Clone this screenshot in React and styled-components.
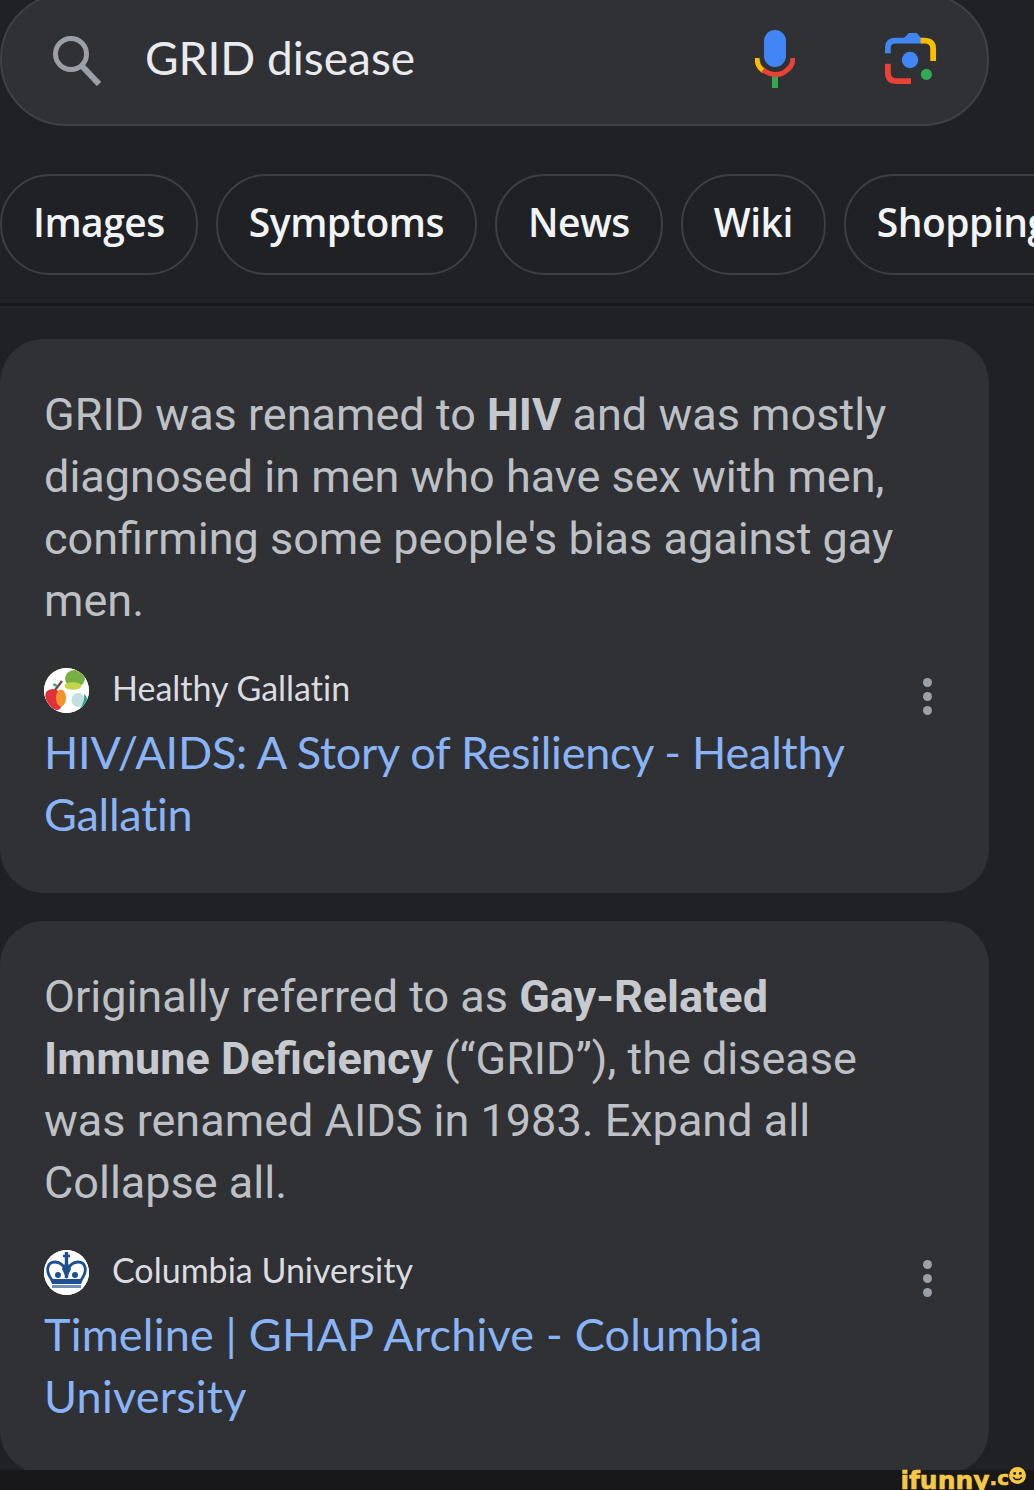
import React from 'react';
import styled, { createGlobalStyle } from 'styled-components';

const GlobalStyle = createGlobalStyle`
  html, body {
    margin: 0;
    padding: 0;
    background: #202124;
  }
`;

const Page = styled.div`
  position: relative;
  width: 1034px;
  height: 1490px;
  overflow: hidden;
  background: #202124;
  font-family: Roboto, "Liberation Sans", sans-serif;
`;

const SearchBar = styled.div`
  box-sizing: border-box;
  width: 989px;
  height: 133px;
  margin-top: -7px;
  display: flex;
  align-items: center;
  padding-left: 50px;
  background: #303134;
  border: 2px solid #3f4145;
  border-radius: 66px;
`;

const SearchText = styled.div`
  margin-left: 43px;
  margin-bottom: 5px;
  flex: 1;
  font-family: Lato, "Noto Sans", sans-serif;
  font-size: 46px;
  font-variant-ligatures: none;
  color: #e8eaed;
`;

const IconSlot = styled.div`
  display: flex;
  margin-right: ${(p) => p.$gap}px;
  margin-bottom: 2px;
`;

const ChipRow = styled.div`
  display: flex;
  gap: 18px;
  margin-top: 48px;
  overflow: hidden;
`;

const Chip = styled.div`
  box-sizing: border-box;
  flex: none;
  height: 101px;
  padding: 0 31px 6px;
  display: flex;
  align-items: center;
  border: 2px solid #3c4043;
  border-radius: 50px;
  font-family: "Open Sans", Lato, sans-serif;
  font-size: 39px;
  font-weight: 600;
  letter-spacing: -0.5px;
  color: #f1f3f4;
`;

const Divider = styled.div`
  height: 3px;
  margin-top: 28px;
  background: #17181a;
  border-bottom: 2px solid #27282b;
`;

const Card = styled.div`
  box-sizing: border-box;
  width: 989px;
  height: ${(p) => p.$height}px;
  margin-top: ${(p) => p.$top}px;
  padding: 45px 44px 0;
  background: #303134;
  border-radius: 44px;
`;

const Snippet = styled.div`
  font-size: 45px;
  line-height: 62px;
  color: #bdc1c6;

  b {
    font-weight: 700;
    color: #c6c9ce;
  }
`;

const SourceRow = styled.div`
  display: flex;
  align-items: center;
  margin-top: 27px;
  height: 62px;
`;

const Favicon = styled.div`
  flex: none;
  display: flex;
  width: 45px;
  height: 45px;
  margin-top: 1px;
  border-radius: 50%;
  overflow: hidden;
  background: #fff;
`;

const SourceName = styled.div`
  flex: 1;
  margin-left: 23px;
  margin-top: -5px;
  font-family: Lato, "Noto Sans", sans-serif;
  font-size: 34px;
  font-variant-ligatures: none;
  color: #dadce0;
`;

const Dots = styled.div`
  display: flex;
  flex-direction: column;
  gap: 5px;
  margin-right: 13px;
  margin-top: 12px;
`;

const Dot = styled.span`
  width: 9px;
  height: 9px;
  border-radius: 50%;
  background: #9aa0a6;
`;

const ResultLink = styled.div`
  margin-top: 0;
  font-family: Lato, "Noto Sans", sans-serif;
  font-size: 45px;
  font-variant-ligatures: none;
  letter-spacing: ${(p) => p.$spacing}px;
  line-height: 62px;
  color: #8ab4f8;
`;

const WatermarkStrip = styled.div`
  position: absolute;
  left: 0;
  right: 0;
  bottom: 0;
  height: 20px;
  background: #18181a;
`;

const Watermark = styled.div`
  position: absolute;
  right: 8px;
  top: -3px;
  display: flex;
  align-items: flex-start;
  font-family: "DejaVu Sans", sans-serif;
  font-weight: 700;
  font-size: 25px;
  line-height: 28px;
  color: #f6c945;
  -webkit-text-stroke: 0.6px #f6c945;
`;

const WatermarkTld = styled.span`
  font-size: 20px;
  line-height: 22px;
`;

const SearchIcon = () => (
  <svg width="50" height="52" viewBox="0 0 50 52" fill="none" stroke="#9aa0a6">
    <circle cx="19" cy="20" r="15.5" strokeWidth="5" />
    <path d="M30 32 L47 50" strokeWidth="6" />
  </svg>
);

const MicIcon = () => (
  <svg width="40" height="58" viewBox="0 0 40 58" fill="none">
    <rect x="9" y="0" width="22" height="37" rx="11" fill="#4285f4" />
    <path d="M17 46 h6 v12 h-6z" fill="#34a853" />
    <path d="M2 28 C2 34 4 38 9 41" stroke="#fbbc04" strokeWidth="5" />
    <path d="M8 40 C16 46 26 46 32 40 C36 37 38 33 38 28" stroke="#ea4335" strokeWidth="5" />
  </svg>
);

const LensIcon = () => (
  <svg width="52" height="54" viewBox="0 0 54 54" fill="none">
    <path d="M20 5 L25 0 H33 L38 6 H20z" fill="#4285f4" />
    <path d="M3 21 V15 C3 10 6 8 11 8 H22 M20 8 H39" stroke="#4285f4" strokeWidth="6" />
    <path d="M37 8 H41 C47 8 50 11 50 16 V29" stroke="#fbbc04" strokeWidth="6" />
    <path d="M3 32 V41 C3 47 6 50 12 50 H27" stroke="#ea4335" strokeWidth="6" />
    <circle cx="26" cy="28" r="8.5" fill="#4285f4" />
    <circle cx="43" cy="43" r="5.8" fill="#34a853" />
  </svg>
);

const GallatinLogo = () => (
  <svg width="45" height="45" viewBox="0 0 45 45">
    <rect width="45" height="45" fill="#fff" />
    <ellipse cx="31" cy="10.5" rx="10" ry="8.5" fill="#76b043" />
    <ellipse cx="29" cy="18" rx="8.5" ry="3.8" fill="#c3d64a" />
    <path d="M2 24 C7 19 14 20 17 27 C19 34 18 41 14 42 C7 43 -1 33 2 24z" fill="#e0303a" />
    <ellipse cx="17" cy="30" rx="5" ry="8.5" fill="#f0932b" />
    <ellipse cx="34" cy="32" rx="6.5" ry="7" fill="#c4e0de" />
    <path d="M40 26 C46 30 43 40 34 43 C38 38 41 33 40 26z" fill="#1fa58f" />
    <path d="M11 22 L18 13" stroke="#7a4a38" strokeWidth="2.4" />
    <path d="M9 16 C11 15 13 16 13 18 C11 19 9 18 9 16z" fill="#1fa58f" />
  </svg>
);

const ColumbiaLogo = () => (
  <svg width="45" height="45" viewBox="0 0 45 45" fill="none">
    <rect width="45" height="45" fill="#fff" />
    <path d="M22.5 2 V28" stroke="#1d4f91" strokeWidth="3.4" />
    <path d="M19 6 H26" stroke="#1d4f91" strokeWidth="2.4" />
    <path d="M22.5 11 L27 19 L22.5 29 L18 19z" fill="#1d4f91" />
    <path d="M8 30 C1 21 3 12 11 12 C16 12 19 15 21 19 M37 30 C44 21 42 12 34 12 C29 12 26 15 24 19" stroke="#1d4f91" strokeWidth="2.8" />
    <circle cx="14" cy="25" r="3" fill="#1d4f91" />
    <circle cx="31" cy="25" r="3" fill="#1d4f91" />
    <path d="M6 29 H39 L37 34 H8z" fill="#1d4f91" />
    <path d="M8 35 H37 V38 H8z" fill="#6c8fbd" />
  </svg>
);

const Smiley = () => (
  <svg width="17" height="17" viewBox="0 0 24 24">
    <circle cx="12" cy="12" r="12" fill="#f6c945" />
    <circle cx="8" cy="9" r="2" fill="#18181a" />
    <circle cx="16" cy="9" r="2" fill="#18181a" />
    <path d="M6 14 C8 19 16 19 18 14" stroke="#18181a" strokeWidth="2" fill="none" />
  </svg>
);

const chips = ['Images', 'Symptoms', 'News', 'Wiki', 'Shopping'];

const Source = ({ logo, name }) => (
  <SourceRow>
    <Favicon>{logo}</Favicon>
    <SourceName>{name}</SourceName>
    <Dots>
      <Dot />
      <Dot />
      <Dot />
    </Dots>
  </SourceRow>
);

const App = () => (
  <Page>
    <GlobalStyle />
    <SearchBar>
      <SearchIcon />
      <SearchText>GRID disease</SearchText>
      <IconSlot $gap={90}>
        <MicIcon />
      </IconSlot>
      <IconSlot $gap={50}>
        <LensIcon />
      </IconSlot>
    </SearchBar>
    <ChipRow>
      {chips.map((c) => (
        <Chip key={c}>{c}</Chip>
      ))}
    </ChipRow>
    <Divider />
    <Card $top={31} $height={554}>
      <Snippet>
        GRID was renamed to <b>HIV</b> and was mostly
        <br />
        diagnosed in men who have sex with men,
        <br />
        confirming some people's bias against gay
        <br />
        men.
      </Snippet>
      <Source logo={<GallatinLogo />} name="Healthy Gallatin" />
      <ResultLink $spacing={-0.25}>
        HIV/AIDS: A Story of Resiliency - Healthy
        <br />
        Gallatin
      </ResultLink>
    </Card>
    <Card $top={28} $height={553}>
      <Snippet>
        Originally referred to as <b>Gay-Related</b>
        <br />
        <b>Immune Deficiency</b> (“GRID”), the disease
        <br />
        was renamed AIDS in 1983. Expand all
        <br />
        Collapse all.
      </Snippet>
      <Source logo={<ColumbiaLogo />} name="Columbia University" />
      <ResultLink $spacing={0.2}>
        Timeline | GHAP Archive - Columbia
        <br />
        University
      </ResultLink>
    </Card>
    <WatermarkStrip>
      <Watermark>
        ifunny
        <WatermarkTld>.c</WatermarkTld>
        <Smiley />
      </Watermark>
    </WatermarkStrip>
  </Page>
);

export default App;
